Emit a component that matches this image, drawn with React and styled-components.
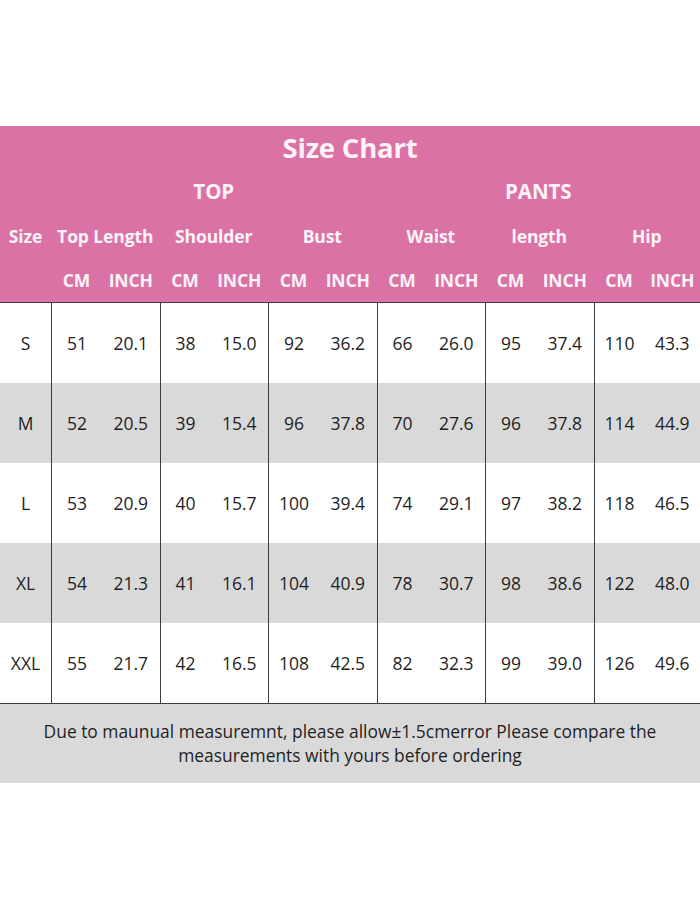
import React from "react";
import styled, { createGlobalStyle } from "styled-components";

const GlobalStyle = createGlobalStyle`
  html, body { margin: 0; padding: 0; background: #ffffff; }
  body { font-family: "Open Sans", "Noto Sans", "Liberation Sans", sans-serif; }
  * { box-sizing: border-box; }
`;

const COLS = "51px repeat(5, 51px 57.5px) 51px 1fr";

const Page = styled.div`
  width: 700px;
  padding-top: 126px;
  padding-bottom: 125px;
`;

const Header = styled.div`
  background: #db72a5;
  color: #fdf3f8;
  font-weight: 700;
`;

const Title = styled.div`
  height: 44px;
  display: flex;
  align-items: center;
  justify-content: center;
  font-size: 27.5px;
  letter-spacing: -0.2px;
  padding-bottom: 2px;
`;

const HeadGrid = styled.div`
  display: grid;
  grid-template-columns: ${COLS};
  height: 44px;
  align-items: center;
  font-size: ${(p) => p.$size || 17.5}px;
  padding-bottom: ${(p) => p.$lift || 0}px;
`;

const HeadCell = styled.div`
  grid-column: ${(p) => p.$col};
  text-align: center;
  white-space: nowrap;
  letter-spacing: -0.1px;
`;

const Body = styled.div`
  border-top: 1px solid #3d3d3d;
  border-bottom: 1px solid #3d3d3d;
`;

const Row = styled.div`
  display: grid;
  grid-template-columns: ${COLS};
  height: 80px;
  background: ${(p) => (p.$alt ? "#d9d9d9" : "#ffffff")};
  color: #1f1f1f;
  font-size: 17.5px;
`;

const Cell = styled.div`
  display: flex;
  align-items: center;
  justify-content: center;
  border-left: ${(p) => (p.$divider ? "1px solid #3d3d3d" : "none")};
  white-space: nowrap;
  padding-bottom: 1px;
`;

const Note = styled.div`
  background: #d9d9d9;
  height: 79px;
  display: flex;
  align-items: center;
  justify-content: center;
  text-align: center;
  color: #1f1f1f;
  font-size: 17.4px;
  line-height: 24px;
  padding: 0 20px 2px;
`;

const groups = ["Top Length", "Shoulder", "Bust", "Waist", "length", "Hip"];

const rows = [
  ["S", 51, "20.1", 38, "15.0", 92, "36.2", 66, "26.0", 95, "37.4", 110, "43.3"],
  ["M", 52, "20.5", 39, "15.4", 96, "37.8", 70, "27.6", 96, "37.8", 114, "44.9"],
  ["L", 53, "20.9", 40, "15.7", 100, "39.4", 74, "29.1", 97, "38.2", 118, "46.5"],
  ["XL", 54, "21.3", 41, "16.1", 104, "40.9", 78, "30.7", 98, "38.6", 122, "48.0"],
  ["XXL", 55, "21.7", 42, "16.5", 108, "42.5", 82, "32.3", 99, "39.0", 126, "49.6"],
];

export default function App() {
  return (
    <>
      <GlobalStyle />
      <Page>
        <Header>
          <Title>Size Chart</Title>
          <HeadGrid $size={20.5} $lift={3}>
            <HeadCell $col="2 / 8">TOP</HeadCell>
            <HeadCell $col="8 / 14">PANTS</HeadCell>
          </HeadGrid>
          <HeadGrid>
            <HeadCell $col="1 / 2">Size</HeadCell>
            {groups.map((g, i) => (
              <HeadCell key={g} $col={`${2 + i * 2} / ${4 + i * 2}`}>
                {g}
              </HeadCell>
            ))}
          </HeadGrid>
          <HeadGrid>
            {groups.map((g, i) => (
              <React.Fragment key={g}>
                <HeadCell $col={`${2 + i * 2}`}>CM</HeadCell>
                <HeadCell $col={`${3 + i * 2}`}>INCH</HeadCell>
              </React.Fragment>
            ))}
          </HeadGrid>
        </Header>
        <Body>
          {rows.map((r, ri) => (
            <Row key={r[0]} $alt={ri % 2 === 1}>
              {r.map((v, ci) => (
                <Cell key={ci} $divider={ci > 0 && ci % 2 === 1}>
                  {v}
                </Cell>
              ))}
            </Row>
          ))}
        </Body>
        <Note>
          Due to maunual measuremnt, please allow±1.5cmerror Please compare the
          measurements with yours before ordering
        </Note>
      </Page>
    </>
  );
}
